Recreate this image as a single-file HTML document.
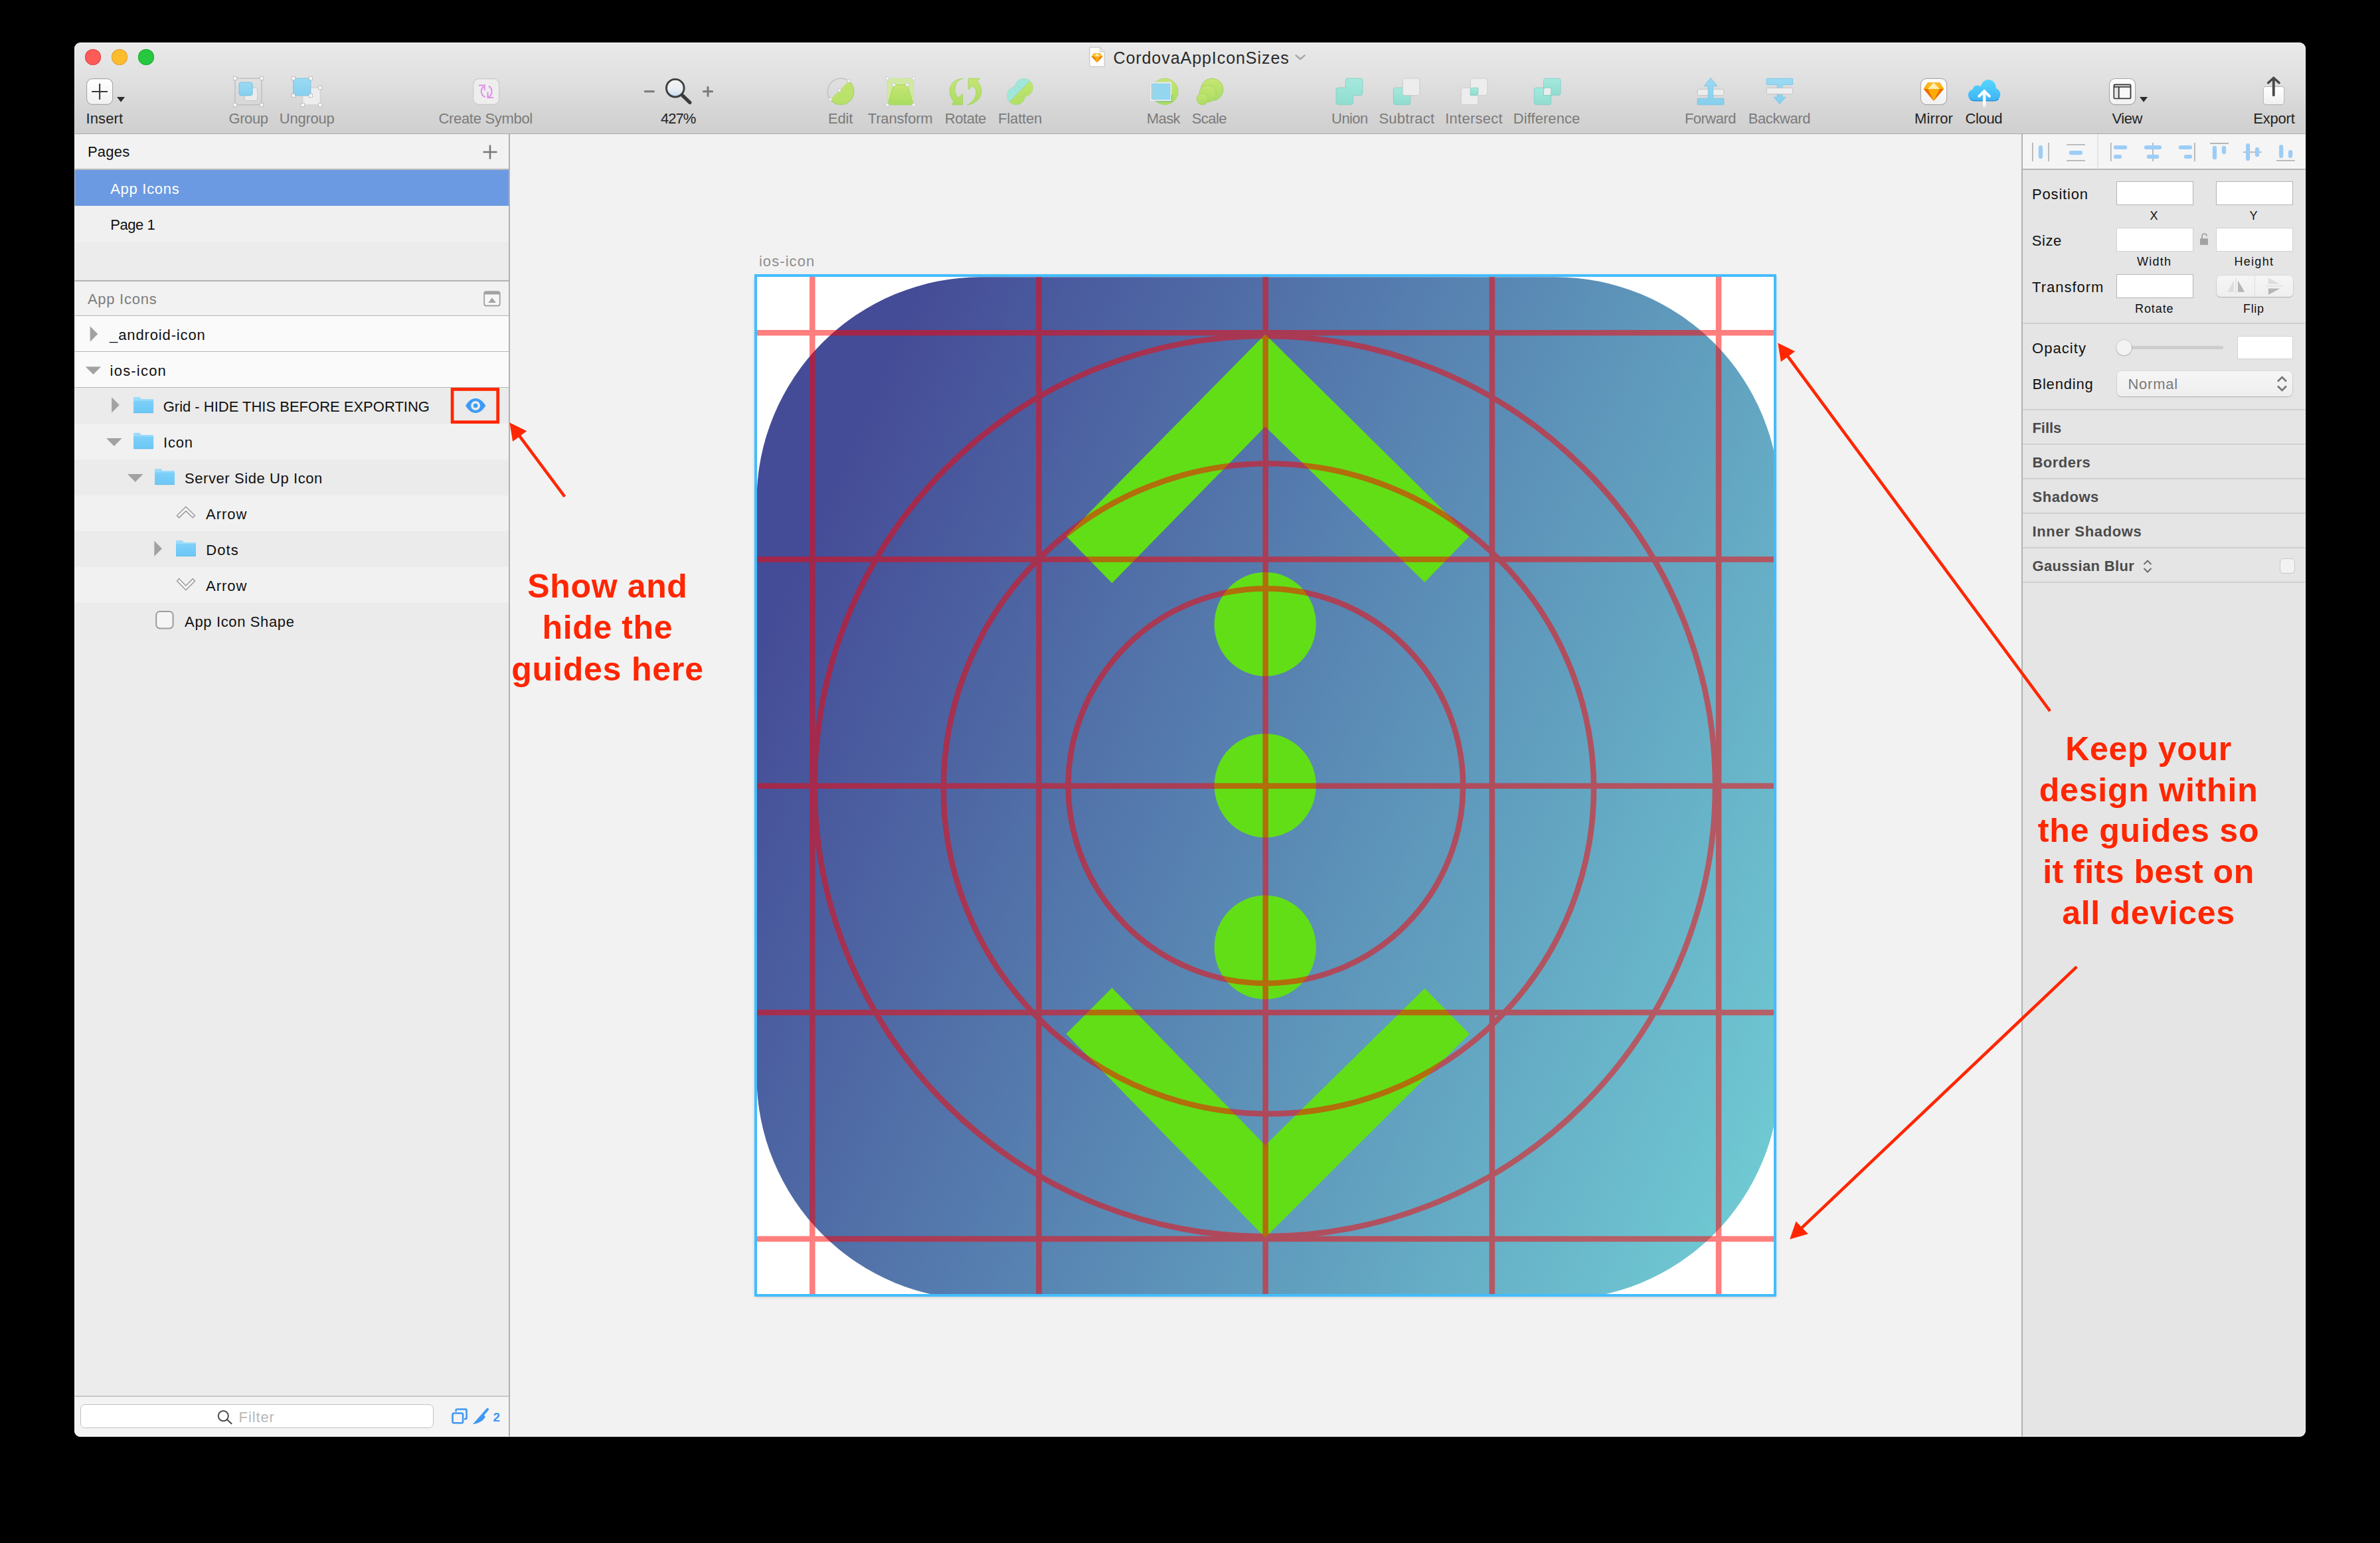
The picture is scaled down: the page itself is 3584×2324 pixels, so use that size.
<!DOCTYPE html>
<html lang="en"><head><meta charset="utf-8"><title>CordovaAppIconSizes</title>
<style>
html,body{margin:0;padding:0;background:#000;}
body{width:3584px;height:2324px;position:relative;overflow:hidden;font-family:"Liberation Sans",sans-serif;}
#win{position:absolute;left:0;top:0;width:3584px;height:2324px;clip-path:inset(64px 112px 160px 112px round 9px);}
.t{position:absolute;white-space:nowrap;line-height:1;font-family:"Liberation Sans",sans-serif;}
svg{overflow:visible;display:block;}
.inp{background:#fff;border:1px solid #c2c2c2;box-sizing:border-box;}
</style></head><body><div id="win">
<div style="position:absolute;left:112px;top:64px;width:3360px;height:137px;background:linear-gradient(#e9e9e9 0%,#e1e1e1 38%,#d6d6d6 72%,#d0d0d0 100%);"></div>
<div style="position:absolute;left:112px;top:200.7px;width:3360px;height:1.3px;background:#acacac;"></div>
<div style="position:absolute;left:128px;top:74px;width:24px;height:24px;border-radius:50%;background:#fc5b57;box-shadow:inset 0 0 0 1px #df4744;"></div>
<div style="position:absolute;left:168px;top:74px;width:24px;height:24px;border-radius:50%;background:#fdbc2e;box-shadow:inset 0 0 0 1px #dea032;"></div>
<div style="position:absolute;left:208px;top:74px;width:24px;height:24px;border-radius:50%;background:#27c840;box-shadow:inset 0 0 0 1px #1dad2b;"></div>
<span class="t" style="left:1676.40px;top:74.73px;font-size:25px;color:#2a2a2a;letter-spacing:0.946px;">CordovaAppIconSizes</span>
<span class="t" style="left:129.42px;top:168.47px;font-size:22px;color:#232323;letter-spacing:0.140px;">Insert</span>
<span class="t" style="left:344.52px;top:168.47px;font-size:22px;color:#7b7b7b;letter-spacing:-0.432px;">Group</span>
<span class="t" style="left:420.82px;top:168.47px;font-size:22px;color:#7b7b7b;letter-spacing:-0.229px;">Ungroup</span>
<span class="t" style="left:660.42px;top:168.47px;font-size:22px;color:#7b7b7b;letter-spacing:-0.307px;">Create Symbol</span>
<span class="t" style="left:994.92px;top:168.47px;font-size:22px;color:#232323;letter-spacing:-0.949px;">427%</span>
<span class="t" style="left:1247.02px;top:168.47px;font-size:22px;color:#7b7b7b;letter-spacing:-0.197px;">Edit</span>
<span class="t" style="left:1306.82px;top:168.47px;font-size:22px;color:#7b7b7b;letter-spacing:-0.200px;">Transform</span>
<span class="t" style="left:1422.82px;top:168.47px;font-size:22px;color:#7b7b7b;letter-spacing:-0.460px;">Rotate</span>
<span class="t" style="left:1503.12px;top:168.47px;font-size:22px;color:#7b7b7b;letter-spacing:-0.173px;">Flatten</span>
<span class="t" style="left:1726.82px;top:168.47px;font-size:22px;color:#7b7b7b;letter-spacing:-0.614px;">Mask</span>
<span class="t" style="left:1794.72px;top:168.47px;font-size:22px;color:#7b7b7b;letter-spacing:-0.579px;">Scale</span>
<span class="t" style="left:2005.12px;top:168.47px;font-size:22px;color:#7b7b7b;letter-spacing:-0.591px;">Union</span>
<span class="t" style="left:2076.42px;top:168.47px;font-size:22px;color:#7b7b7b;letter-spacing:0.255px;">Subtract</span>
<span class="t" style="left:2176.22px;top:168.47px;font-size:22px;color:#7b7b7b;letter-spacing:0.256px;">Intersect</span>
<span class="t" style="left:2278.82px;top:168.47px;font-size:22px;color:#7b7b7b;letter-spacing:0.061px;">Difference</span>
<span class="t" style="left:2536.92px;top:168.47px;font-size:22px;color:#7b7b7b;letter-spacing:-0.511px;">Forward</span>
<span class="t" style="left:2632.72px;top:168.47px;font-size:22px;color:#7b7b7b;letter-spacing:-0.411px;">Backward</span>
<span class="t" style="left:2883.12px;top:168.47px;font-size:22px;color:#232323;letter-spacing:0.078px;">Mirror</span>
<span class="t" style="left:2959.42px;top:168.47px;font-size:22px;color:#232323;letter-spacing:-0.341px;">Cloud</span>
<span class="t" style="left:3180.52px;top:168.47px;font-size:22px;color:#232323;letter-spacing:-0.457px;">View</span>
<span class="t" style="left:3393.22px;top:168.47px;font-size:22px;color:#232323;letter-spacing:-0.193px;">Export</span>
<svg style="position:absolute;left:0;top:0" width="3584" height="230" viewBox="0 0 3584 230"><defs>
<linearGradient id="gBtn" x1="0" y1="0" x2="0" y2="1"><stop offset="0" stop-color="#ffffff"/><stop offset="1" stop-color="#f1f1f1"/></linearGradient>
<linearGradient id="gGreen" x1="0" y1="0" x2="0" y2="1"><stop offset="0" stop-color="#c6e672"/><stop offset="1" stop-color="#a9dc62"/></linearGradient>
<linearGradient id="gTeal" x1="0" y1="0" x2="0" y2="1"><stop offset="0" stop-color="#a6e9de"/><stop offset="1" stop-color="#8fdccf"/></linearGradient>
<linearGradient id="gBlue" x1="0" y1="0" x2="0" y2="1"><stop offset="0" stop-color="#9bdaf3"/><stop offset="1" stop-color="#86cfee"/></linearGradient>
<linearGradient id="gCloud" x1="0" y1="0" x2="0" y2="1"><stop offset="0" stop-color="#55d6ff"/><stop offset="1" stop-color="#3db4f4"/></linearGradient>
<linearGradient id="gLens" x1="0" y1="0" x2="0" y2="1"><stop offset="0" stop-color="#f4f4f4"/><stop offset="0.6" stop-color="#e9eef3"/><stop offset="1" stop-color="#bcd9f1"/></linearGradient>
<linearGradient id="gStem" x1="0" y1="0" x2="0" y2="1"><stop offset="0" stop-color="#fff"/><stop offset="0.7" stop-color="#fff"/><stop offset="1" stop-color="#fff" stop-opacity="0.55"/></linearGradient>
</defs><rect x="130.6" y="118.6" width="39" height="38.8" rx="8.5" fill="url(#gBtn)" stroke="#a7a7a7" stroke-width="1.1"/><path d="M138.2 138H162M150.1 126V150" stroke="#3a3a3a" stroke-width="2.1" fill="none"/><path d="M176 145.9H188.1L182.05 153.8Z" fill="#2c2c2c"/><rect x="354" y="118" width="40" height="40" fill="none" stroke="#b7b7b7" stroke-width="1.2"/><rect x="368.4" y="132" width="19.2" height="19.6" rx="3.4" fill="#ececec" stroke="#c6c6c6" stroke-width="1"/><rect x="360" y="124" width="20.2" height="20" rx="3.4" fill="url(#gBlue)" stroke="#78c3e4" stroke-width="1"/><rect x="351.4" y="115.4" width="5.2" height="5.2" fill="#f9f9f9" stroke="#bcbcbc" stroke-width="0.9"/><rect x="391.4" y="115.4" width="5.2" height="5.2" fill="#f9f9f9" stroke="#bcbcbc" stroke-width="0.9"/><rect x="351.4" y="155.4" width="5.2" height="5.2" fill="#f9f9f9" stroke="#bcbcbc" stroke-width="0.9"/><rect x="391.4" y="155.4" width="5.2" height="5.2" fill="#f9f9f9" stroke="#bcbcbc" stroke-width="0.9"/><rect x="455.8" y="132" width="26.4" height="26" fill="#ededed" stroke="#cbcbcb" stroke-width="1"/><rect x="441.8" y="118" width="26.1" height="26" fill="url(#gBlue)" stroke="#7cc6e6" stroke-width="1"/><rect x="439.2" y="115.4" width="5.2" height="5.2" fill="#f9f9f9" stroke="#bcbcbc" stroke-width="0.9"/><rect x="465.3" y="115.4" width="5.2" height="5.2" fill="#f9f9f9" stroke="#bcbcbc" stroke-width="0.9"/><rect x="439.2" y="141.4" width="5.2" height="5.2" fill="#f9f9f9" stroke="#bcbcbc" stroke-width="0.9"/><rect x="465.3" y="141.4" width="5.2" height="5.2" fill="#f9f9f9" stroke="#bcbcbc" stroke-width="0.9"/><rect x="479.6" y="129.4" width="5.2" height="5.2" fill="#f9f9f9" stroke="#bcbcbc" stroke-width="0.9"/><rect x="453.2" y="155.4" width="5.2" height="5.2" fill="#f9f9f9" stroke="#bcbcbc" stroke-width="0.9"/><rect x="479.6" y="155.4" width="5.2" height="5.2" fill="#f9f9f9" stroke="#bcbcbc" stroke-width="0.9"/><rect x="712.8" y="118.6" width="38.8" height="38.8" rx="8.5" fill="#eeeeee" stroke="#c9c9c9" stroke-width="1.1"/><g fill="none" stroke="#df8fe8" stroke-width="2"><path d="M728.3 130.2 A9.6 9.6 0 0 0 730.6 146.4"/><path d="M721 128.6H729.8V136.2"/><path d="M735.9 129.6 A9.6 9.6 0 0 1 736 146"/><path d="M734.5 138.6V146.9H743"/></g><path d="M971.3 137.8H984.4" stroke="#7a7a7a" stroke-width="3" stroke-linecap="round"/><path d="M1059.4 137.8H1072.6M1066 131.2V144.4" stroke="#7a7a7a" stroke-width="3" stroke-linecap="round"/><path d="M1027.3 143.4L1038.8 154.4" stroke="#3b3b3b" stroke-width="5.4" stroke-linecap="round"/><circle cx="1016.8" cy="132.7" r="13.3" fill="url(#gLens)" stroke="#3e3e3e" stroke-width="2.9"/><circle cx="1266.1" cy="137.8" r="19.7" fill="none" stroke="#bdbdbd" stroke-width="1.3"/><clipPath id="cEd"><circle cx="1266.1" cy="137.8" r="20.0"/></clipPath><g clip-path="url(#cEd)"><path d="M1304.1 96.1 L1224.1 176.1 L1264.1 216.1 L1344.1 136.1Z" fill="url(#gGreen)"/></g><path d="M1278.06 122.14 A19.7 19.7 0 1 1 1250.44 149.76" fill="none" stroke="#a1d45e" stroke-width="1"/><circle cx="1278.1" cy="122.1" r="2.4" fill="#f6f6f6" stroke="#c2c2c2" stroke-width="0.9"/><circle cx="1264.1" cy="136.1" r="2.4" fill="#f6f6f6" stroke="#c2c2c2" stroke-width="0.9"/><circle cx="1250.4" cy="149.8" r="2.4" fill="#f6f6f6" stroke="#c2c2c2" stroke-width="0.9"/><rect x="1336.2" y="118.1" width="39.7" height="39.8" fill="#d2e9a2" stroke="#c2df8c" stroke-width="1" stroke-dasharray="2 1.5"/><path d="M1346 127.7H1366.1L1375.6 157.8H1336.5Z" fill="url(#gGreen)" stroke="#a4d560" stroke-width="1"/><circle cx="1336.2" cy="118.1" r="2.5" fill="#f6f6f6" stroke="#c6c6c6" stroke-width="0.9"/><circle cx="1375.9" cy="118.1" r="2.5" fill="#f6f6f6" stroke="#c6c6c6" stroke-width="0.9"/><circle cx="1336.2" cy="157.9" r="2.5" fill="#f6f6f6" stroke="#c6c6c6" stroke-width="0.9"/><circle cx="1375.9" cy="157.9" r="2.5" fill="#f6f6f6" stroke="#c6c6c6" stroke-width="0.9"/><circle cx="1346" cy="127.7" r="2.5" fill="#f6f6f6" stroke="#c6c6c6" stroke-width="0.9"/><circle cx="1366.1" cy="127.7" r="2.5" fill="#f6f6f6" stroke="#c6c6c6" stroke-width="0.9"/><path d="M1450.9 118.2 C1446 118.6 1443 119.4 1440.2 120.8 C1436.6 122.6 1434.2 124.8 1432.8 127.5 C1431 130.6 1430.1 133.6 1430.1 136.9 C1430.1 140.4 1430.8 143.4 1432.1 146.3 C1433.1 148.8 1434.4 150.9 1436.1 153 L1433.1 157.7 H1449.6 V141.3 L1443.5 147 C1441.6 145.4 1440.3 143.7 1439.5 141.6 C1438.4 139.5 1437.8 137.3 1437.8 134.9 C1437.8 132.2 1438.3 129.8 1439.2 127.5 C1440.2 125 1441.6 123.1 1443.5 121.4 C1445.6 119.7 1448 118.7 1450.9 118.2Z" fill="url(#gGreen)" stroke="#a2d460" stroke-width="0.9"/><path d="M1458.2 118.2 H1475.1 L1471.4 122.8 C1473.8 125 1475.5 127.4 1476.5 130.2 C1477.4 132.8 1477.8 135.4 1477.8 138.2 C1477.8 141.4 1476.9 144.3 1475.1 147 C1473.4 149.8 1471.2 152 1468.4 153.7 C1465 155.9 1461.2 157.3 1456.6 157.9 C1459.4 156.8 1461.7 155.2 1463.7 153 C1465.8 151 1467.3 148.8 1468.4 146.3 C1469.5 144 1470.1 141.5 1470.1 138.9 C1470.1 136.9 1469.5 135.1 1468.4 133.5 C1467.4 131.9 1466.1 130.6 1464.4 129.5 L1458.2 134.9Z" fill="url(#gGreen)" stroke="#a2d460" stroke-width="0.9"/><clipPath id="cFl"><circle cx="1541.9" cy="132" r="13.9"/><circle cx="1530.05" cy="143.95" r="13.9"/></clipPath><g clip-path="url(#cFl)"><rect x="1510" y="112" width="56" height="52" fill="#a0e6da"/><path d="M1556.1 117 L1515.2 157.7 L1515.2 170 L1570 170 L1570 117Z" fill="url(#gGreen)"/><path d="M1556.1 117 L1515.2 157.7" stroke="#8fd7c4" stroke-width="0.8"/></g><circle cx="1541.9" cy="132" r="13.9" fill="none" stroke="#9fd4a0" stroke-width="0.6" stroke-opacity="0.35"/><circle cx="1530.05" cy="143.95" r="13.9" fill="none" stroke="#9fd4a0" stroke-width="0.6" stroke-opacity="0.35"/><circle cx="1754.3" cy="137.9" r="19.7" fill="url(#gGreen)" stroke="#a4d560" stroke-width="0.9"/><rect x="1731.6" y="123.6" width="32.6" height="29" fill="#f1f1f1" fill-opacity="0.93" stroke="#d4d4d4" stroke-width="0.9"/><rect x="1734.1" y="126.1" width="27.9" height="23.6" fill="#92d7ef" stroke="#82cce8" stroke-width="0.8"/><path d="M1741.5 123.3 A19.7 19.7 0 0 0 1741 152.3" fill="none" stroke="#c5cfc0" stroke-width="0.9"/><path d="M1764.5 142.3 V152.8 H1740.4" fill="none" stroke="#56b08a" stroke-width="0.9"/><circle cx="1825.2" cy="134.9" r="16.8" fill="url(#gGreen)" stroke="#a5cf66" stroke-width="0.9"/><circle cx="1818.8" cy="140.9" r="12.8" fill="url(#gGreen)" stroke="#a5cf66" stroke-width="0.9"/><circle cx="1810.8" cy="149" r="8.7" fill="url(#gGreen)" stroke="#a5cf66" stroke-width="0.9"/><path d="M2029.6 118.1 H2048.6 A3.2 3.2 0 0 1 2051.8 121.3 V140.4 A3.2 3.2 0 0 1 2048.6 143.6 H2037.6 V154.5 A3.2 3.2 0 0 1 2034.4 157.7 H2015.3 A3.2 3.2 0 0 1 2012.1 154.5 V135.4 A3.2 3.2 0 0 1 2015.3 132.2 H2026.4 V121.3 A3.2 3.2 0 0 1 2029.6 118.1Z" fill="url(#gTeal)" stroke="#84cfc3" stroke-width="0.9"/><rect x="2098.4" y="132.2" width="25.5" height="25.5" rx="3.2" fill="url(#gTeal)" stroke="#84cfc3" stroke-width="0.9"/><rect x="2112.3" y="118.1" width="25.5" height="25.5" rx="3.2" fill="#ededed" stroke="#c9c9c9" stroke-width="0.9"/><rect x="2200.3" y="132.2" width="25.5" height="25.5" rx="3.2" fill="#ededed" stroke="#c9c9c9" stroke-width="0.9"/><rect x="2214.3" y="118.1" width="25.5" height="25.5" rx="3.2" fill="#ededed" stroke="#c9c9c9" stroke-width="0.9"/><path d="M2217.5 132.2 H2225.8 V140.4 A3.2 3.2 0 0 1 2222.6 143.6 H2214.3 V135.4 A3.2 3.2 0 0 1 2217.5 132.2Z" fill="url(#gTeal)" stroke="#84cfc3" stroke-width="0.9"/><rect x="2310.2" y="132.2" width="25.5" height="25.5" rx="3.2" fill="url(#gTeal)" stroke="#84cfc3" stroke-width="0.9"/><rect x="2324.5" y="118.1" width="25.5" height="25.5" rx="3.2" fill="url(#gTeal)" stroke="#84cfc3" stroke-width="0.9"/><path d="M2327.7 132.2 H2335.7 V140.4 A3.2 3.2 0 0 1 2332.5 143.6 H2324.5 V135.4 A3.2 3.2 0 0 1 2327.7 132.2Z" fill="#ededed" stroke="#84cfc3" stroke-width="0.9"/><rect x="2556.2" y="134.3" width="39.6" height="9.3" rx="1.2" fill="#ededed" stroke="#c3c3c3" stroke-width="1"/><path d="M2576 117.2 L2586 129.7 H2579.7 V148.2 H2595.2 A0.8 0.8 0 0 1 2596 149 V157 A0.8 0.8 0 0 1 2595.2 157.8 H2556.9 A0.8 0.8 0 0 1 2556.1 157 V149 A0.8 0.8 0 0 1 2556.9 148.2 H2572.2 V129.7 H2566.1Z" fill="url(#gBlue)" stroke="#7dc5e5" stroke-width="0.9"/><path d="M2661 118.2 H2698.9 A0.8 0.8 0 0 1 2699.7 119 V126.8 A0.8 0.8 0 0 1 2698.9 127.6 H2683.9 V146.3 H2688.9 L2680 156.7 L2671.1 146.3 H2676.3 V127.6 H2661 A0.8 0.8 0 0 1 2660.2 126.8 V119 A0.8 0.8 0 0 1 2661 118.2Z" fill="url(#gBlue)" stroke="#7dc5e5" stroke-width="0.9"/><rect x="2660.3" y="132.4" width="39.3" height="9.3" rx="1.2" fill="#ededed" stroke="#c3c3c3" stroke-width="1"/><rect x="2892.4" y="118.4" width="39.2" height="39.2" rx="8.8" fill="url(#gBtn)" stroke="#a9a9a9" stroke-width="1.1"/><path d="M2903.2 124.3 H2920.9 L2927.2 133.9 L2911.9 152.1 L2896.7 133.9Z" fill="#fdad00"/><path d="M2896.7 133.9 H2903.2 L2911.9 152.1Z" fill="#ec6c00"/><path d="M2927.2 133.9 H2920.7 L2911.9 152.1Z" fill="#ec6c00"/><path d="M2903.2 124.3 L2911.9 124.3 L2903.2 133.9 L2896.7 133.9Z" fill="#fdb827"/><path d="M2920.9 124.3 L2911.9 124.3 L2920.7 133.9 L2927.2 133.9Z" fill="#fdb827"/><path d="M2911.9 124.3 L2920.7 133.9 H2903.2Z" fill="#feecb3"/><path d="M2903.2 124.3 L2903.2 133.9 L2896.7 133.9Z" fill="#fdb300"/><path d="M2920.9 124.3 L2920.7 133.9 L2927.2 133.9Z" fill="#fdb300"/><path d="M2973.5 151.9 C2967.5 151.9 2963.9 148 2963.9 143.4 C2963.9 139.2 2966.8 135.8 2970.6 135.1 C2971.1 131.4 2974 128.6 2977.8 128.6 C2979.7 128.6 2981.4 129.3 2982.7 130.4 C2984.2 124.3 2988.6 120 2994 120 C3000.6 120 3005.7 125.4 3005.7 132.3 C3005.7 132.6 3005.7 132.9 3005.7 133.2 C3009.6 134.4 3012.2 138 3012.2 142.3 C3012.2 147.8 3008 151.9 3002.5 151.9Z" fill="url(#gCloud)"/><path d="M2967 149.6 C2968.7 151.1 2970.9 151.9 2973.5 151.9 H3002.5 C3005.4 151.9 3007.9 150.8 3009.7 149" fill="none" stroke="#1d86d6" stroke-width="1.1"/><rect x="2985.9" y="138.5" width="4.5" height="22.7" fill="url(#gStem)"/><path d="M2980.3 145 L2988.1 137.1 L2995.9 145" fill="none" stroke="#fff" stroke-width="4" stroke-linecap="round" stroke-linejoin="miter"/><rect x="3176.5" y="118.5" width="39.1" height="39.1" rx="8.6" fill="url(#gBtn)" stroke="#a7a7a7" stroke-width="1.1"/><rect x="3183.4" y="127.5" width="25.1" height="20.9" rx="1.4" fill="#f7f7f7" stroke="#3a3a3a" stroke-width="1.9"/><rect x="3184.5" y="131.8" width="5.4" height="15.6" fill="#e6e6e6"/><path d="M3183.4 130.9H3208.5M3190.7 130.9V148.4" stroke="#3a3a3a" stroke-width="1.9" fill="none"/><path d="M3222.1 146H3234.1L3228.1 153.7Z" fill="#2c2c2c"/><rect x="3408.3" y="130.5" width="31.4" height="27.1" rx="4" fill="url(#gBtn)" stroke="#b7b7b7" stroke-width="1.1"/><path d="M3423.8 118V143.3" stroke="#48484a" stroke-width="3.8" stroke-linecap="round" fill="none"/><path d="M3415.7 124.7L3423.8 117.3L3432.1 124.7" stroke="#48484a" stroke-width="3.5" stroke-linecap="round" stroke-linejoin="miter" fill="none"/><path d="M1640.8 71.2 H1656.3 L1663.2 78.2 V99.6 A0.8 0.8 0 0 1 1662.4 100.4 H1641.6 A0.8 0.8 0 0 1 1640.8 99.6Z" fill="#fdfdfd" stroke="#bdbdbd" stroke-width="1"/><path d="M1656.3 71.2 V78.2 H1663.2Z" fill="#e9e9e9" stroke="#c4c4c4" stroke-width="0.8"/><path d="M1647.4 80 H1656.6 L1660.6 85.1 L1652 94 L1643.5 85.1Z" fill="#fdad00"/><path d="M1643.5 85.1 H1647.6 L1652 94Z M1660.6 85.1 H1656.4 L1652 94Z" fill="#ee7a00"/><path d="M1652 80 L1656.4 85.1 H1647.6Z" fill="#feecb3"/><path d="M1647.4 80 L1652 80 L1647.6 85.1 L1643.5 85.1Z M1656.6 80 L1652 80 L1656.4 85.1 L1660.6 85.1Z" fill="#fdc02f"/><path d="M1951.5 83.4 L1958.1 89 L1964.7 83.4" fill="none" stroke="#a6a6a6" stroke-width="2.4" stroke-linecap="round" stroke-linejoin="round"/></svg>
<div style="position:absolute;left:112px;top:202px;width:654px;height:1962px;background:#ececec;"></div>
<div style="position:absolute;left:766px;top:202px;width:2px;height:1962px;background:#b2b2b2;"></div>
<div style="position:absolute;left:112px;top:202px;width:654px;height:52.3px;background:#f2f2f2;"></div>
<div style="position:absolute;left:112px;top:254.3px;width:654px;height:2px;background:#b9b9b9;"></div>
<span class="t" style="left:131.92px;top:217.67px;font-size:22px;color:#111;letter-spacing:0.259px;">Pages</span>
<svg style="position:absolute;left:726px;top:217px;" width="24" height="24" viewBox="0 0 24 24"><path d="M12 1.5V22.5M1.5 12H22.5" stroke="#787878" stroke-width="2.6" fill="none"/></svg>
<div style="position:absolute;left:112px;top:256.3px;width:654px;height:53.7px;background:#6c9ae2;"></div>
<div style="position:absolute;left:112px;top:310px;width:654px;height:54.2px;background:#f0f0f0;"></div>
<span class="t" style="left:166.22px;top:274.27px;font-size:22px;color:#fff;letter-spacing:0.710px;">App Icons</span>
<span class="t" style="left:166.22px;top:328.17px;font-size:22px;color:#111;letter-spacing:-0.442px;">Page 1</span>
<div style="position:absolute;left:112px;top:422px;width:654px;height:1.9px;background:#b3b3b3;"></div>
<div style="position:absolute;left:112px;top:423.9px;width:654px;height:50.6px;background:#f2f2f2;"></div>
<div style="position:absolute;left:112px;top:474.5px;width:654px;height:1.8px;background:#b7b7b7;"></div>
<span class="t" style="left:131.92px;top:439.57px;font-size:22px;color:#7d7d7d;letter-spacing:0.735px;">App Icons</span>
<div style="position:absolute;left:112px;top:476.3px;width:654px;height:52.4px;background:#fafafa;"></div>
<div style="position:absolute;left:112px;top:528.7px;width:654px;height:1.4px;background:#b5b5b5;"></div>
<div style="position:absolute;left:112px;top:530.1px;width:654px;height:52.5px;background:#fafafa;"></div>
<div style="position:absolute;left:112px;top:582.6px;width:654px;height:1.4px;background:#b5b5b5;"></div>
<span class="t" style="left:165.12px;top:494.17px;font-size:22px;color:#111;letter-spacing:0.867px;">_android-icon</span>
<span class="t" style="left:165.62px;top:547.97px;font-size:22px;color:#111;letter-spacing:1.201px;">ios-icon</span>
<div style="position:absolute;left:112px;top:585px;width:654px;height:54px;background:#ebebeb;"></div>
<div style="position:absolute;left:112px;top:638px;width:654px;height:54px;background:#f1f1f1;"></div>
<div style="position:absolute;left:112px;top:692px;width:654px;height:54px;background:#ebebeb;"></div>
<div style="position:absolute;left:112px;top:746px;width:654px;height:54px;background:#f1f1f1;"></div>
<div style="position:absolute;left:112px;top:800px;width:654px;height:54px;background:#ebebeb;"></div>
<div style="position:absolute;left:112px;top:854px;width:654px;height:54px;background:#f1f1f1;"></div>
<div style="position:absolute;left:112px;top:908px;width:654px;height:54px;background:#ebebeb;"></div>
<span class="t" style="left:245.72px;top:601.87px;font-size:22px;color:#111;letter-spacing:-0.005px;">Grid - HIDE THIS BEFORE EXPORTING</span>
<span class="t" style="left:246.12px;top:655.92px;font-size:22px;color:#111;letter-spacing:0.779px;">Icon</span>
<span class="t" style="left:277.92px;top:709.97px;font-size:22px;color:#111;letter-spacing:0.586px;">Server Side Up Icon</span>
<span class="t" style="left:310.02px;top:764.02px;font-size:22px;color:#111;letter-spacing:0.967px;">Arrow</span>
<span class="t" style="left:310.32px;top:818.07px;font-size:22px;color:#111;letter-spacing:1.028px;">Dots</span>
<span class="t" style="left:310.02px;top:872.12px;font-size:22px;color:#111;letter-spacing:0.967px;">Arrow</span>
<span class="t" style="left:278.12px;top:926.17px;font-size:22px;color:#111;letter-spacing:0.635px;">App Icon Shape</span>
<div style="position:absolute;left:112px;top:2102px;width:654px;height:2px;background:#c8c8c8;"></div>
<div style="position:absolute;left:112px;top:2104px;width:654px;height:60px;background:#f4f4f4;"></div>
<div style="position:absolute;left:121px;top:2115px;width:531.8px;height:35.5px;background:#fff;border:1.5px solid #c1c1c1;border-radius:7px;box-sizing:border-box;"></div>
<span class="t" style="left:359.62px;top:2124.17px;font-size:22px;color:#b8b8b8;letter-spacing:0.886px;">Filter</span>
<span class="t" style="left:742.40px;top:2125.11px;font-size:19px;color:#3f97f5;font-weight:bold;">2</span>
<svg style="position:absolute;left:0;top:0" width="800" height="2200" viewBox="0 0 800 2200"><defs><linearGradient id="gFold" x1="0" y1="0" x2="0" y2="1"><stop offset="0" stop-color="#7dd0f9"/><stop offset="1" stop-color="#6cc7f5"/></linearGradient></defs><path d="M135.6 491.3 L147.29999999999998 503.05 L135.6 514.8Z" fill="#a2a2a2"/><path d="M128.7 552.2 H152.2 L140.45 564.1Z" fill="#a2a2a2"/><path d="M168.1 598.2 L179.79999999999998 609.95 L168.1 621.7Z" fill="#a2a2a2"/><path d="M202.29999999999998 598.1 H209.4 C210.5 598.1 211.0 598.5 211.5 599.2 L212.7 601.1 H229.9 A1.2 1.2 0 0 1 231.1 602.3000000000001 V620.9 A1.2 1.2 0 0 1 229.9 622.1 H202.29999999999998 A1.2 1.2 0 0 1 201.1 620.9 V599.3000000000001 A1.2 1.2 0 0 1 202.29999999999998 598.1Z" fill="#9bdbfb"/><path d="M201.1 603.5 H231.1 V620.9 A1.2 1.2 0 0 1 229.9 622.1 H202.29999999999998 A1.2 1.2 0 0 1 201.1 620.9Z" fill="url(#gFold)"/><path d="M201.7 621.8000000000001 H230.5" stroke="#58b6e6" stroke-width="0.8"/><path d="M160.1 660 H183.6 L171.85 671.9Z" fill="#a2a2a2"/><path d="M202.29999999999998 652.1 H209.4 C210.5 652.1 211.0 652.5 211.5 653.2 L212.7 655.1 H229.9 A1.2 1.2 0 0 1 231.1 656.3000000000001 V674.9 A1.2 1.2 0 0 1 229.9 676.1 H202.29999999999998 A1.2 1.2 0 0 1 201.1 674.9 V653.3000000000001 A1.2 1.2 0 0 1 202.29999999999998 652.1Z" fill="#9bdbfb"/><path d="M201.1 657.5 H231.1 V674.9 A1.2 1.2 0 0 1 229.9 676.1 H202.29999999999998 A1.2 1.2 0 0 1 201.1 674.9Z" fill="url(#gFold)"/><path d="M201.7 675.8000000000001 H230.5" stroke="#58b6e6" stroke-width="0.8"/><path d="M192 714 H215.5 L203.75 725.9Z" fill="#a2a2a2"/><path d="M234.2 706.1 H241.3 C242.4 706.1 242.9 706.5 243.4 707.2 L244.6 709.1 H261.8 A1.2 1.2 0 0 1 263 710.3000000000001 V728.9 A1.2 1.2 0 0 1 261.8 730.1 H234.2 A1.2 1.2 0 0 1 233 728.9 V707.3000000000001 A1.2 1.2 0 0 1 234.2 706.1Z" fill="#9bdbfb"/><path d="M233 711.5 H263 V728.9 A1.2 1.2 0 0 1 261.8 730.1 H234.2 A1.2 1.2 0 0 1 233 728.9Z" fill="url(#gFold)"/><path d="M233.6 729.8000000000001 H262.4" stroke="#58b6e6" stroke-width="0.8"/><path d="M232.3 814.5 L244.0 826.25 L232.3 838.0Z" fill="#a2a2a2"/><path d="M266.2 813.9 H273.3 C274.4 813.9 274.9 814.3 275.4 815.0 L276.6 816.9 H293.8 A1.2 1.2 0 0 1 295 818.1 V836.6999999999999 A1.2 1.2 0 0 1 293.8 837.9 H266.2 A1.2 1.2 0 0 1 265 836.6999999999999 V815.1 A1.2 1.2 0 0 1 266.2 813.9Z" fill="#9bdbfb"/><path d="M265 819.3 H295 V836.6999999999999 A1.2 1.2 0 0 1 293.8 837.9 H266.2 A1.2 1.2 0 0 1 265 836.6999999999999Z" fill="url(#gFold)"/><path d="M265.6 837.6 H294.4" stroke="#58b6e6" stroke-width="0.8"/><path d="M279.9 763.3 L293.5 776.5 L290.3 779.8 L279.9 769.6 L269.6 779.8 L266.6 776.5Z" fill="#f7f7f7" stroke="#9b9b9b" stroke-width="1.5" stroke-linejoin="miter"/><path d="M279.9 888.8 L293.5 875.3 L290.3 871.6 L279.9 882.2 L269.6 871.6 L266.6 875.3Z" fill="#f7f7f7" stroke="#9b9b9b" stroke-width="1.5" stroke-linejoin="miter"/><rect x="235.2" y="921" width="25.4" height="25.4" rx="5.5" fill="#f5f5f5" stroke="#9c9c9c" stroke-width="2"/><rect x="729.2" y="439.1" width="23.5" height="21.4" rx="3" fill="#f7f7f7" stroke="#a0a0a0" stroke-width="1.8"/><path d="M729.2 443.4 V442.1 A3 3 0 0 1 732.2 439.1 H749.7 A3 3 0 0 1 752.7 442.1 V443.4Z" fill="#a3a3a3"/><path d="M741 448.2 L747 455.9 H735.1Z" fill="#a5a5a5"/><path d="M701 611 C705.5 603.6 710.6 600 716.1 600 C721.7 600 726.8 603.6 731.3 611 C726.8 618.4 721.7 622 716.1 622 C710.6 622 705.5 618.4 701 611Z" fill="#3d9bf7"/><circle cx="716.1" cy="611" r="6.9" fill="#ebebeb"/><circle cx="716.1" cy="611" r="3.3" fill="#3d9bf7"/><circle cx="336.3" cy="2132.6" r="7.6" fill="none" stroke="#4c4c4c" stroke-width="2"/><path d="M341.8 2138 L348.6 2144.2" stroke="#4c4c4c" stroke-width="2.2" stroke-linecap="round"/><path d="M688.6 2122.5 H700.6 A2 2 0 0 1 702.6 2124.5 V2135.2 A2 2 0 0 1 700.6 2137.2 H699" fill="none" stroke="#3f97f4" stroke-width="2.6"/><path d="M686.6 2126.2 V2124.5 A2 2 0 0 1 688.6 2122.5" fill="none" stroke="#3f97f4" stroke-width="2.6"/><rect x="681.5" y="2128.5" width="15.6" height="14.8" rx="2.2" fill="none" stroke="#3f97f4" stroke-width="2.6"/><path d="M732.7 2121.5 A2 2 0 0 1 736.1 2123.3 L729.1 2131.5 L730.9 2133.7 C728.6 2138.6 722.5 2143.8 712 2145Z" fill="#3f97f4"/></svg>
<div style="position:absolute;left:768px;top:202px;width:2276px;height:1962px;background:#f2f2f2;"></div>
<span class="t" style="left:1142.92px;top:383.37px;font-size:22px;color:#8e8e8e;letter-spacing:1.073px;">ios-icon</span>
<div style="position:absolute;left:1138.0px;top:415.6px;width:1535.3999999999999px;height:1535.3999999999999px;background:#fff;box-shadow:0 1px 6px rgba(0,0,0,0.28);"></div>
<svg style="position:absolute;left:1138.0px;top:415.6px;overflow:hidden" width="1535.40" height="1535.40" viewBox="0 0 180 180"><defs><linearGradient id="ig" x1="0.137" y1="0.061" x2="1.169" y2="0.521"><stop offset="0" stop-color="#454c97"/><stop offset="1" stop-color="#70ccd4"/></linearGradient></defs><rect x="0.16" y="0.16" width="180.6" height="180.6" rx="39.6" ry="39.6" fill="url(#ig)"/><polygon points="89.95,10.25 126,45.9 118.1,54.05 89.95,26.55 62.9,54.2 54.8,45.9" fill="#62de17"/><polygon points="89.95,169.75 126,133.8 118.1,125.75 89.95,153.45 62.9,125.65 54.8,133.8" fill="#62de17"/><ellipse cx="89.95" cy="61.45" rx="8.98" ry="9.18" fill="#62de17"/><ellipse cx="89.95" cy="89.95" rx="8.98" ry="9.18" fill="#62de17"/><ellipse cx="89.95" cy="118.5" rx="8.98" ry="9.18" fill="#62de17"/><g fill="none" stroke="#ff0000" opacity="0.5" stroke-width="1"><path d="M10 0V180"/><path d="M0 10H180"/><path d="M50 0V180"/><path d="M0 50H180"/><path d="M90 0V180"/><path d="M0 90H180"/><path d="M130 0V180"/><path d="M0 130H180"/><path d="M170 0V180"/><path d="M0 170H180"/><circle cx="90.02" cy="90.0" r="34.85"/><circle cx="90.55" cy="90.5" r="57.4"/><circle cx="89.9" cy="90.05" r="79.5"/></g></svg>
<div style="position:absolute;left:1135.5px;top:413.1px;width:1531.4px;height:1531.5px;border:4px solid #43bdfd;"></div>
<div style="position:absolute;left:3044px;top:202px;width:428px;height:1962px;background:#e5e5e5;"></div>
<div style="position:absolute;left:3044px;top:202px;width:2px;height:1962px;background:#b1b1b1;"></div>
<div style="position:absolute;left:3046px;top:202px;width:426px;height:52px;background:#f5f5f5;"></div>
<div style="position:absolute;left:3046px;top:254px;width:426px;height:2px;background:#b6b6b6;"></div>
<div style="position:absolute;left:3158px;top:202px;width:2px;height:52px;background:#e3e3e3;"></div>
<span class="t" style="left:3060.12px;top:282.27px;font-size:22px;color:#111;letter-spacing:0.793px;">Position</span>
<span class="t" style="left:3059.82px;top:352.17px;font-size:22px;color:#111;letter-spacing:0.507px;">Size</span>
<span class="t" style="left:3060.12px;top:422.37px;font-size:22px;color:#111;letter-spacing:0.987px;">Transform</span>
<span class="t" style="left:3060.12px;top:513.97px;font-size:22px;color:#111;letter-spacing:1.039px;">Opacity</span>
<span class="t" style="left:3060.42px;top:567.67px;font-size:22px;color:#111;letter-spacing:0.813px;">Blending</span>
<div class="inp" style="position:absolute;left:3187px;top:273px;width:116px;height:36px;border-color:#b4b4b4;"></div>
<div class="inp" style="position:absolute;left:3337px;top:273px;width:116px;height:36px;border-color:#b4b4b4;"></div>
<div class="inp" style="position:absolute;left:3187px;top:343.2px;width:116px;height:35.6px;border-color:#d0d0d0;"></div>
<div class="inp" style="position:absolute;left:3337px;top:343.2px;width:116px;height:35.6px;border-color:#d0d0d0;"></div>
<div class="inp" style="position:absolute;left:3187px;top:413px;width:116px;height:36px;border-color:#b4b4b4;"></div>
<div class="inp" style="position:absolute;left:3369px;top:505.5px;width:84px;height:35.5px;border-color:#d2d2d2;"></div>
<span class="t" style="left:3237.50px;top:315.66px;font-size:18px;color:#111;">X</span>
<span class="t" style="left:3387.50px;top:315.66px;font-size:18px;color:#111;">Y</span>
<span class="t" style="left:3218.06px;top:385.46px;font-size:18px;color:#111;letter-spacing:1.267px;">Width</span>
<span class="t" style="left:3364.41px;top:385.46px;font-size:18px;color:#111;letter-spacing:1.309px;">Height</span>
<span class="t" style="left:3215.01px;top:455.66px;font-size:18px;color:#111;letter-spacing:0.909px;">Rotate</span>
<span class="t" style="left:3377.96px;top:455.66px;font-size:18px;color:#111;letter-spacing:0.692px;">Flip</span>
<div style="position:absolute;left:3337.5px;top:414.5px;width:115px;height:32.8px;background:linear-gradient(#f5f5f5,#efefef);border-radius:6px;box-shadow:0 0 0 0.6px rgba(0,0,0,0.09),0 1px 1.5px rgba(0,0,0,0.2);"></div>
<div style="position:absolute;left:3395.1px;top:415px;width:1.4px;height:32px;background:#dedede;"></div>
<div style="position:absolute;left:3046px;top:486px;width:426px;height:2px;background:#cfcfcf;"></div>
<div style="position:absolute;left:3046px;top:616px;width:426px;height:2px;background:#cfcfcf;"></div>
<div style="position:absolute;left:3046px;top:668px;width:426px;height:2px;background:#cfcfcf;"></div>
<div style="position:absolute;left:3046px;top:720px;width:426px;height:2px;background:#cfcfcf;"></div>
<div style="position:absolute;left:3046px;top:772px;width:426px;height:2px;background:#cfcfcf;"></div>
<div style="position:absolute;left:3046px;top:824px;width:426px;height:2px;background:#cfcfcf;"></div>
<div style="position:absolute;left:3046px;top:876px;width:426px;height:2px;background:#cfcfcf;"></div>
<div style="position:absolute;left:3205px;top:520.5px;width:143px;height:5.5px;background:#cdcdcd;border-radius:3px;"></div>
<div style="position:absolute;left:3187px;top:511.5px;width:23px;height:23px;background:#f3f3f3;border-radius:50%;box-shadow:0 0.5px 2px rgba(0,0,0,0.35),0 0 0 0.5px rgba(0,0,0,0.08);"></div>
<div style="position:absolute;left:3187.8px;top:558.9px;width:264.4px;height:37.8px;background:linear-gradient(#f6f6f6,#eeeeee);border-radius:6.5px;box-shadow:0 0 0 0.6px rgba(0,0,0,0.10),0 1px 1.5px rgba(0,0,0,0.2);"></div>
<span class="t" style="left:3204.42px;top:567.67px;font-size:22px;color:#7a7a7a;letter-spacing:0.784px;">Normal</span>
<svg style="position:absolute;left:3428px;top:565px;" width="17" height="26" viewBox="0 0 17 26"><path d="M2 9.5 L8.5 3 L15 9.5 M2 16.5 L8.5 23 L15 16.5" fill="none" stroke="#757575" stroke-width="2.6"/></svg>
<span class="t" style="left:3060.42px;top:634.17px;font-size:22px;color:#4b4b4b;font-weight:bold;letter-spacing:-0.018px;">Fills</span>
<span class="t" style="left:3060.42px;top:686.27px;font-size:22px;color:#4b4b4b;font-weight:bold;letter-spacing:0.513px;">Borders</span>
<span class="t" style="left:3060.42px;top:738.27px;font-size:22px;color:#4b4b4b;font-weight:bold;letter-spacing:0.561px;">Shadows</span>
<span class="t" style="left:3060.42px;top:790.27px;font-size:22px;color:#4b4b4b;font-weight:bold;letter-spacing:0.664px;">Inner Shadows</span>
<span class="t" style="left:3060.42px;top:842.27px;font-size:22px;color:#4b4b4b;font-weight:bold;letter-spacing:0.357px;">Gaussian Blur</span>
<svg style="position:absolute;left:3227px;top:842px;" width="14" height="22" viewBox="0 0 14 22"><path d="M1.5 8 L7 2.5 L12.5 8 M1.5 14 L7 19.5 L12.5 14" fill="none" stroke="#6e6e6e" stroke-width="2"/></svg>
<div style="position:absolute;left:3432.5px;top:840.5px;width:23px;height:23px;background:#f2f2f2;border:1px solid #c9c9c9;border-radius:6px;box-sizing:border-box;"></div>
<svg style="position:absolute;left:3040px;top:200px" width="440" height="300" viewBox="3040 200 440 300"><path d="M3060.9 215.1L3060.9 243" stroke="#b5b5b5" stroke-width="1.8"/><path d="M3085 215.1L3085 243" stroke="#b5b5b5" stroke-width="1.8"/><rect x="3069.8" y="218.9" width="6.3" height="20.2" rx="3.1" fill="#9ccdf6"/><path d="M3112.2 217.8L3140 217.8" stroke="#b5b5b5" stroke-width="1.8"/><path d="M3112.2 241.9L3140 241.9" stroke="#b5b5b5" stroke-width="1.8"/><rect x="3115.8" y="226.9" width="20.2" height="6.3" rx="3.1" fill="#9ccdf6"/><path d="M3178.8 215.1L3178.8 243" stroke="#b5b5b5" stroke-width="1.8"/><rect x="3182.9" y="219" width="20.3" height="6.1" rx="3.0" fill="#9ccdf6"/><rect x="3182.9" y="233" width="12.2" height="6.1" rx="3.0" fill="#9ccdf6"/><path d="M3242 215.1L3242 243" stroke="#b5b5b5" stroke-width="1.8"/><rect x="3228.9" y="219" width="26.2" height="6.1" rx="3.0" fill="#9ccdf6"/><rect x="3232.7" y="233" width="18.6" height="6.1" rx="3.0" fill="#9ccdf6"/><path d="M3305 215.1L3305 243" stroke="#b5b5b5" stroke-width="1.8"/><rect x="3280.8" y="219" width="20.3" height="6.1" rx="3.0" fill="#9ccdf6"/><rect x="3288.9" y="233" width="12.2" height="6.1" rx="3.0" fill="#9ccdf6"/><path d="M3328.1 216L3356 216" stroke="#b5b5b5" stroke-width="1.8"/><rect x="3331.8" y="219.8" width="6.3" height="20.4" rx="3.1" fill="#9ccdf6"/><rect x="3345.8" y="219.8" width="6.3" height="12.3" rx="3.1" fill="#9ccdf6"/><path d="M3378 229.1L3405.8 229.1" stroke="#b5b5b5" stroke-width="1.8"/><rect x="3382" y="216" width="6.2" height="26.1" rx="3.1" fill="#9ccdf6"/><rect x="3395.9" y="221.9" width="6.3" height="14.3" rx="3.1" fill="#9ccdf6"/><path d="M3428.1 241.9L3455.9 241.9" stroke="#b5b5b5" stroke-width="1.8"/><rect x="3432.1" y="218" width="6.2" height="20.0" rx="3.1" fill="#9ccdf6"/><rect x="3446" y="226" width="6.3" height="12.0" rx="3.2" fill="#9ccdf6"/><rect x="3313" y="359.2" width="12" height="9.7" fill="#a2a2a2"/><path d="M3316 359.5 V355.7 A3.6 3.6 0 0 1 3323.2 355.7" fill="none" stroke="#a2a2a2" stroke-width="1.9"/><path d="M3354.4 439.8 H3363.8 V422.3Z" fill="#dcdcdc"/><path d="M3366.9 418.4V443.7" stroke="#e0e0e0" stroke-width="1.5"/><path d="M3370 422.3 V439.8 H3380.1Z" fill="#b5b5b5"/><path d="M3415.9 418.8 V427.8 H3433.4Z" fill="#dcdcdc"/><path d="M3412 430.9H3437.6" stroke="#e0e0e0" stroke-width="1.5"/><path d="M3415.9 434.4 H3433.4 L3415.9 444.1Z" fill="#b5b5b5"/></svg>
<svg style="position:absolute;left:0;top:0" width="3584" height="2324" viewBox="0 0 3584 2324"><line x1="850.4" y1="748.0" x2="780.2" y2="653.8" stroke="#ff2600" stroke-width="4.6"/><polygon points="767.4,636.6 793.2,649.2 772.1,664.9" fill="#ff2600"/><line x1="3087.1" y1="1071.0" x2="2690.1" y2="533.8" stroke="#ff2600" stroke-width="4.6"/><polygon points="2677.3,516.5 2703.1,529.2 2681.8,544.9" fill="#ff2600"/><line x1="3127.3" y1="1456.1" x2="2710.8" y2="1851.7" stroke="#ff2600" stroke-width="4.6"/><polygon points="2695.2,1866.5 2704.6,1839.4 2722.8,1858.5" fill="#ff2600"/><rect x="681.1" y="586.4" width="68.6" height="49.3" fill="none" stroke="#ff2600" stroke-width="4.7"/></svg>
<span class="t" style="left:794.35px;top:858.06px;font-size:50px;color:#ff2600;font-weight:bold;letter-spacing:0.627px;">Show and</span>
<span class="t" style="left:816.60px;top:920.26px;font-size:50px;color:#ff2600;font-weight:bold;letter-spacing:0.617px;">hide the</span>
<span class="t" style="left:770.25px;top:982.56px;font-size:50px;color:#ff2600;font-weight:bold;letter-spacing:0.806px;">guides here</span>
<span class="t" style="left:3110.20px;top:1102.87px;font-size:50px;color:#ff2600;font-weight:bold;letter-spacing:0.686px;">Keep your</span>
<span class="t" style="left:3070.70px;top:1164.66px;font-size:50px;color:#ff2600;font-weight:bold;letter-spacing:0.797px;">design within</span>
<span class="t" style="left:3068.80px;top:1226.07px;font-size:50px;color:#ff2600;font-weight:bold;letter-spacing:0.877px;">the guides so</span>
<span class="t" style="left:3076.20px;top:1288.26px;font-size:50px;color:#ff2600;font-weight:bold;letter-spacing:0.492px;">it fits best on</span>
<span class="t" style="left:3105.20px;top:1350.46px;font-size:50px;color:#ff2600;font-weight:bold;letter-spacing:0.704px;">all devices</span>
<div style="position:absolute;left:112px;top:64px;width:3360px;height:2100px;border-radius:9px;box-shadow:inset 0 0 0 1px rgba(255,255,255,0.55);pointer-events:none;"></div>
</div></body></html>
